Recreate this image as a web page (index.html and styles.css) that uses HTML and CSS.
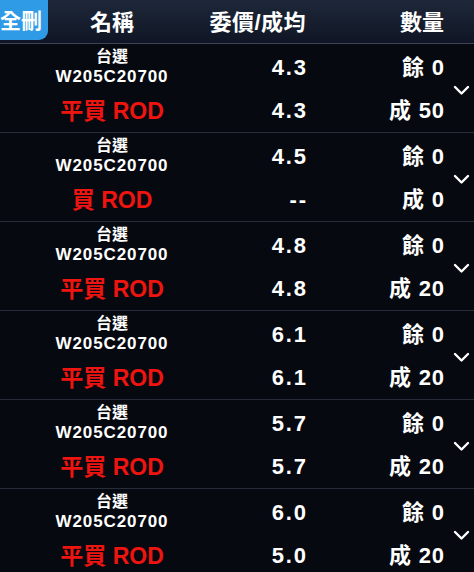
FILE: index.html
```html
<!DOCTYPE html>
<html lang="zh-Hant">
<head>
    <meta charset="UTF-8">
    <meta name="viewport" content="width=device-width, initial-scale=1.0">
    <title>委託查詢</title>
    <link rel="stylesheet" href="styles.css">
</head>
<body>

    <div class="orders">
        <div class="header">
            <button class="delete-all">全刪</button>
            <div class="col-name">名稱</div>
            <div></div>
            <div class="col-price">委價/成均</div>
            <div class="col-qty">數量</div>
            <div></div>
        </div>

        <div class="list" id="list"></div>
    </div>

    <script>
        const orders = [
            { side: '平買', price: '4.3', avg: '4.3', left: 0, done: 50 },
            { side: '買', price: '4.5', avg: '--', left: 0, done: 0 },
            { side: '平買', price: '4.8', avg: '4.8', left: 0, done: 20 },
            { side: '平買', price: '6.1', avg: '6.1', left: 0, done: 20 },
            { side: '平買', price: '5.7', avg: '5.7', left: 0, done: 20 },
            { side: '平買', price: '6.0', avg: '5.0', left: 0, done: 20 }
        ];

        const chevron = '<svg width="17" height="11" viewBox="0 0 17 11"><path d="M2 2 L8.5 8.5 L15 2" fill="none" stroke="#fff" stroke-width="2.4" stroke-linecap="round" stroke-linejoin="round"/></svg>';

        const list = document.getElementById('list');
        orders.forEach(o => {
            const row = document.createElement('div');
            row.className = 'row';
            row.innerHTML = `
                <div class="name">
                    <div class="market">台選</div>
                    <div class="code">W205C20700</div>
                    <div class="side">${o.side} ROD</div>
                </div>
                <div class="price">
                    <div>${o.price}</div>
                    <div>${o.avg}</div>
                </div>
                <div class="qty">
                    <div>餘 ${o.left}</div>
                    <div>成 ${o.done}</div>
                </div>
                <div class="more">${chevron}</div>`;
            list.appendChild(row);
        });
    </script>

</body>
</html>
```

FILE: styles.css
```css
/* General Styles */
body {
    margin: 0;
    padding: 0;
    background-color: #06090f;
    font-family: 'Liberation Sans', 'Noto Sans CJK TC', sans-serif;
    color: #fff;
    height: 572px;
    overflow: hidden;
}

.orders {
    width: 474px;
}

/* Header */
.header {
    display: grid;
    grid-template-columns: 48px 128px 24px 106px 138px 30px;
    align-items: center;
    height: 43px;
    background: linear-gradient(180deg, #1e283a, #0f1524);
    border-bottom: 1px solid #3d4556;
    font-size: 22px;
    font-weight: bold;
    white-space: nowrap;
}

.header > div {
    margin-bottom: 3px;
}

.delete-all {
    align-self: start;
    height: 40px;
    padding: 0 0 2px;
    border: none;
    border-radius: 0 0 9px 0;
    background-color: #2f9be6;
    color: #fff;
    font-family: inherit;
    font-size: 21px;
    font-weight: bold;
    text-align: left;
    white-space: nowrap;
    overflow: hidden;
}

.col-name {
    text-align: center;
}

.col-price,
.col-qty {
    text-align: right;
}

.col-price {
    letter-spacing: 0.5px;
}

/* Rows */
.row {
    display: grid;
    grid-template-columns: 224px 82px 138px 30px;
    height: 88px;
    border-bottom: 1px solid #272d39;
}

.name {
    text-align: center;
    font-weight: bold;
    padding-top: 3px;
}

.market {
    font-size: 16px;
    line-height: 20px;
}

.code {
    font-size: 17px;
    line-height: 20px;
    letter-spacing: 0.9px;
}

.side {
    margin-top: 10px;
    font-size: 23px;
    line-height: 28px;
    color: #ee1410;
}

.price,
.qty {
    display: flex;
    flex-direction: column;
    align-items: flex-end;
    padding-top: 10px;
    font-size: 22px;
    font-weight: bold;
    line-height: 28px;
}

.price div + div,
.qty div + div {
    margin-top: 15px;
}

.price div {
    letter-spacing: 1.8px;
    margin-right: -1.8px;
}

.qty div {
    letter-spacing: 0.8px;
    margin-right: -0.8px;
}

.more {
    display: flex;
    align-items: center;
    justify-content: center;
    padding: 4px 0 0 4px;
}
```
